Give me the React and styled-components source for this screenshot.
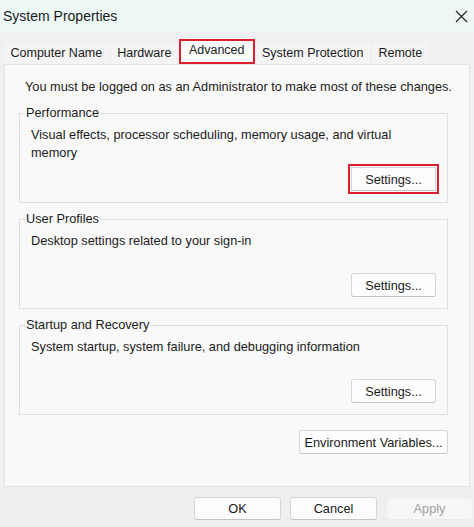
import React from 'react';
import styled, { createGlobalStyle } from 'styled-components';

const Global = createGlobalStyle`
  html, body { margin: 0; padding: 0; background: #f0f0f0; }
  body { font-family: "Liberation Sans", Arial, sans-serif; }
  * { box-sizing: border-box; }
`;

const Window = styled.div`
  width: 474px;
  height: 527px;
  display: flex;
  flex-direction: column;
  background: #f0f0f0;
  color: #1b1b1b;
  font-size: 12.75px;
  overflow: hidden;
`;

const TitleBar = styled.div`
  height: 32px;
  flex: none;
  display: flex;
  align-items: center;
  justify-content: space-between;
  padding: 0 6px 0 3px;
  background: #ecf7f6;
`;

const Title = styled.span`
  font-size: 14px;
  color: #1b1b1b;
`;

const CloseButton = styled.span`
  display: flex;
  width: 14px;
  height: 14px;
  align-items: center;
  justify-content: center;
`;

const TabRow = styled.div`
  flex: none;
  display: flex;
  align-items: flex-end;
  gap: 2px;
  height: 25px;
  margin-top: 7px;
  padding-left: 4px;
`;

const Tab = styled.div`
  height: ${(p) => (p.$active ? '25px' : '22px')};
  display: flex;
  align-items: center;
  font-size: 12.5px;
  padding: ${(p) => (p.$active ? '0 8px 3px' : '0 6.5px')};
  margin: ${(p) => (p.$active ? '0 -1px' : '0')};
  background: ${(p) => (p.$active ? '#fbfbfb' : '#f4f4f4')};
  border: ${(p) => (p.$active ? '2px solid #dc1f2e' : 'none')};
  white-space: nowrap;
  position: relative;
  z-index: ${(p) => (p.$active ? 1 : 0)};
`;

const Panel = styled.div`
  flex: none;
  height: 423px;
  margin: 0 4px;
  background: #f9f9f9;
  border: 1px solid #e4e4e4;
  padding: 13px 21px 0 14px;
  display: flex;
  flex-direction: column;
`;

const Notice = styled.p`
  margin: 0 0 9px;
  padding-left: 6px;
  line-height: 18px;
  white-space: nowrap;
`;

const Group = styled.fieldset`
  margin: 0 0 8px;
  padding: 5px 11px 11px 11px;
  border: 1px solid #dedede;
  min-width: 0;
`;

const Legend = styled.legend`
  margin-left: -6px;
  padding: 0 1px;
  line-height: 16px;
`;

const GroupBody = styled.div`
  height: 65px;
  display: flex;
  flex-direction: column;
`;

const Description = styled.p`
  margin: 0;
  line-height: 18px;
`;

const Button = styled.button`
  font-family: "Liberation Sans", Arial, sans-serif;
  font-size: 12.75px;
  color: ${(p) => (p.disabled ? '#a3a3a3' : '#1b1b1b')};
  background: ${(p) => (p.disabled ? '#f6f6f6' : '#fdfdfd')};
  border: 1px solid ${(p) => (p.disabled ? '#ececec' : '#d6d6d6')};
  border-bottom-color: ${(p) => (p.disabled ? '#ececec' : '#c4c4c4')};
  border-radius: ${(p) => (p.$highlight ? '0' : '3px')};
  height: ${(p) => p.$h || 24}px;
  width: ${(p) => p.$w}px;
  padding: 0;
  display: flex;
  align-items: center;
  justify-content: center;
  outline: ${(p) => (p.$highlight ? '2px solid #dc1f2e' : 'none')};
  outline-offset: 1px;
`;

const GroupButton = styled(Button)`
  margin-top: auto;
  align-self: flex-end;
`;

const EnvRow = styled.div`
  display: flex;
  justify-content: flex-end;
  margin-top: 7px;
`;

const Footer = styled.div`
  flex: 1;
  display: flex;
  justify-content: flex-end;
  align-items: flex-start;
  gap: 9px;
  padding: 10px 1px 0 0;
  background: #efefef;
`;

const groups = [
  {
    title: 'Performance',
    text: 'Visual effects, processor scheduling, memory usage, and virtual memory',
    highlight: true,
  },
  { title: 'User Profiles', text: 'Desktop settings related to your sign-in' },
  {
    title: 'Startup and Recovery',
    text: 'System startup, system failure, and debugging information',
  },
];

const tabs = ['Computer Name', 'Hardware', 'Advanced', 'System Protection', 'Remote'];

export default function App() {
  return (
    <>
      <Global />
      <Window>
        <TitleBar>
          <Title>System Properties</Title>
          <CloseButton>
            <svg width="13" height="13" viewBox="0 0 13 13">
              <path d="M1 1 L12 12 M12 1 L1 12" stroke="#222" strokeWidth="1.1" fill="none" />
            </svg>
          </CloseButton>
        </TitleBar>
        <TabRow>
          {tabs.map((t) => (
            <Tab key={t} $active={t === 'Advanced'}>
              {t}
            </Tab>
          ))}
        </TabRow>
        <Panel>
          <Notice>You must be logged on as an Administrator to make most of these changes.</Notice>
          {groups.map((g) => (
            <Group key={g.title}>
              <Legend>{g.title}</Legend>
              <GroupBody>
                <Description>{g.text}</Description>
                <GroupButton $w={85} $highlight={g.highlight}>
                  Settings...
                </GroupButton>
              </GroupBody>
            </Group>
          ))}
          <EnvRow>
            <Button $w={149}>Environment Variables...</Button>
          </EnvRow>
        </Panel>
        <Footer>
          <Button $w={87} $h={23}>OK</Button>
          <Button $w={87} $h={23}>Cancel</Button>
          <Button $w={87} $h={23} disabled>
            Apply
          </Button>
        </Footer>
      </Window>
    </>
  );
}
